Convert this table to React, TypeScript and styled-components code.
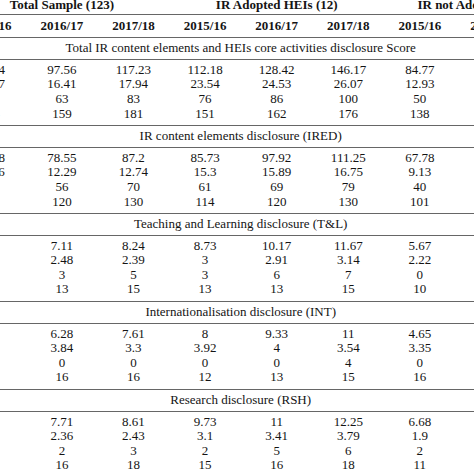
import React, { FC } from 'react';
import styled, { createGlobalStyle } from 'styled-components';

const COL = 71.6;
const LABEL = 72;
const RULE = '#666';

const GlobalStyle = createGlobalStyle`
  html, body {
    margin: 0;
    padding: 0;
    background: #fff;
  }
  body {
    font-family: "Liberation Serif", "Times New Roman", serif;
    color: #141414;
  }
`;

const Frame = styled.div`
  width: 474px;
  height: 474px;
  overflow: hidden;
  background: #fff;
`;

// the table is wider than the window; it is cropped on both sides like the picture
const Table = styled.div`
  width: ${LABEL + COL * 9}px;
  margin: -2.2px 0 0 -117.5px;
  font-size: 13px;
  line-height: 14.6px;
`;

const GroupRow = styled.div`
  display: grid;
  grid-template-columns: ${LABEL}px repeat(3, ${COL * 3}px);
  padding-bottom: 1.6px;
  border-bottom: 1px solid ${RULE};
  font-weight: bold;
  text-align: center;
`;

const HeadRow = styled.div`
  display: grid;
  grid-template-columns: ${LABEL}px repeat(9, ${COL}px);
  padding: 4.3px 0 3.6px;
  border-bottom: 1px solid ${RULE};
  font-weight: bold;
  text-align: center;
`;

const TitleRow = styled.div`
  padding: 2.3px 0 4.1px;
  border-bottom: 1px solid ${RULE};
  text-align: center;
  white-space: nowrap;
`;

const DataBlock = styled.div`
  padding: 2.3px 0 4.3px;
  border-bottom: 1px solid ${RULE};
`;

const DataRow = styled.div`
  display: grid;
  grid-template-columns: ${LABEL}px repeat(9, ${COL}px);
  text-align: center;
  white-space: nowrap;
`;

const Label = styled.span`
  text-align: left;
  padding-left: 4px;
`;

type Section = {
  title: string;
  rows: string[][];
};

const stats = ['Mean', 'SD', 'Min', 'Max'];

const sections: Section[] = [
  {
    title: 'Total IR content elements and HEIs core activities disclosure Score',
    rows: [
      ['88.94', '97.56', '117.23', '112.18', '128.42', '146.17', '84.77', '92.41', '111.06'],
      ['15.87', '16.41', '17.94', '23.54', '24.53', '26.07', '12.93', '13.62', '15.28'],
      ['48', '63', '83', '76', '86', '100', '50', '63', '83'],
      ['138', '159', '181', '151', '162', '176', '138', '159', '181'],
    ],
  },
  {
    title: 'IR content elements disclosure (IRED)',
    rows: [
      ['72.18', '78.55', '87.2', '85.73', '97.92', '111.25', '67.78', '76.45', '84.72'],
      ['11.56', '12.29', '12.74', '15.3', '15.89', '16.75', '9.13', '10.72', '10.64'],
      ['48', '56', '70', '61', '69', '79', '40', '56', '70'],
      ['113', '120', '130', '114', '120', '130', '101', '110', '118'],
    ],
  },
  {
    title: 'Teaching and Learning disclosure (T&L)',
    rows: [
      ['6.5', '7.11', '8.24', '8.73', '10.17', '11.67', '5.67', '6.88', '7.87'],
      ['2.4', '2.48', '2.39', '3', '2.91', '3.14', '2.22', '2.3', '2.13'],
      ['2', '3', '5', '3', '6', '7', '0', '3', '5'],
      ['12', '13', '15', '13', '13', '15', '10', '13', '14'],
    ],
  },
  {
    title: 'Internationalisation disclosure (INT)',
    rows: [
      ['5.2', '6.28', '7.61', '8', '9.33', '11', '4.65', '5.99', '7.24'],
      ['3.6', '3.84', '3.3', '3.92', '4', '3.54', '3.35', '3.74', '3.05'],
      ['0', '0', '0', '0', '0', '4', '0', '0', '0'],
      ['15', '16', '16', '12', '13', '15', '16', '16', '16'],
    ],
  },
  {
    title: 'Research disclosure (RSH)',
    rows: [
      ['6.9', '7.71', '8.61', '9.73', '11', '12.25', '6.68', '7.44', '8.28'],
      ['2.1', '2.36', '2.43', '3.1', '3.41', '3.79', '1.9', '2.18', '2.2'],
      ['1', '2', '3', '2', '5', '6', '2', '2', '3'],
      ['14', '16', '18', '15', '16', '18', '11', '16', '17'],
    ],
  },
];

const groups = ['Total Sample (123)', 'IR Adopted HEIs (12)', 'IR not Adopted HEIs (111)'];
const years = ['2015/16', '2016/17', '2017/18'];

const SectionBlock: FC<{ section: Section }> = ({ section }) => (
  <>
    <TitleRow>{section.title}</TitleRow>
    <DataBlock>
      {section.rows.map((row, i) => (
        <DataRow key={stats[i]}>
          <Label>{stats[i]}</Label>
          {row.map((v, j) => (
            <span key={j}>{v}</span>
          ))}
        </DataRow>
      ))}
    </DataBlock>
  </>
);

const App: FC = () => (
  <Frame>
    <GlobalStyle />
    <Table>
      <GroupRow>
        <span />
        {groups.map((g) => (
          <span key={g}>{g}</span>
        ))}
      </GroupRow>
      <HeadRow>
        <span />
        {groups.map((g) => years.map((y) => <span key={g + y}>{y}</span>))}
      </HeadRow>
      {sections.map((s) => (
        <SectionBlock key={s.title} section={s} />
      ))}
    </Table>
  </Frame>
);

export default App;
